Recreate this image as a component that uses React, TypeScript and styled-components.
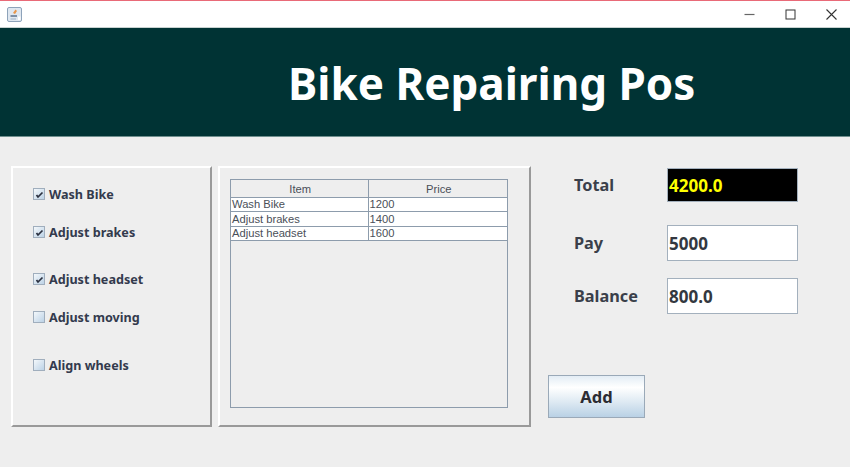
import React, { FC } from 'react';
import styled, { createGlobalStyle } from 'styled-components';

const GlobalStyle = createGlobalStyle`
  html, body {
    margin: 0;
    padding: 0;
    background: #eeeeee;
  }
  body {
    font-family: "Noto Sans", "DejaVu Sans", sans-serif;
  }
`;

const Frame = styled.div`
  width: 850px;
  height: 467px;
  display: flex;
  flex-direction: column;
  overflow: hidden;
  background: #eeeeee;
`;

const TitleBar = styled.div`
  height: 26px;
  flex: none;
  display: flex;
  align-items: center;
  justify-content: space-between;
  padding-left: 7px;
  background: #ffffff;
  border-top: 1px solid #e96a78;
  border-bottom: 1px solid #c8d2d0;
`;

const WindowButtons = styled.div`
  display: flex;
  height: 100%;
  margin-right: -2px;
`;

const WindowButton = styled.div`
  width: 41px;
  display: flex;
  align-items: center;
  justify-content: center;
`;

const Banner = styled.header`
  height: 109px;
  flex: none;
  box-sizing: border-box;
  padding: 27px 0 0 288px;
  background: #003334;
  border-bottom: 1px solid #6f8f8e;
`;

const Title = styled.h1`
  margin: 0;
  color: #ffffff;
  font-size: 44px;
  line-height: 56px;
  font-weight: 700;
  letter-spacing: 0;
  white-space: nowrap;
`;

const Content = styled.main`
  display: flex;
  gap: 6px;
  padding: 29px 0 0 11px;
`;

const Panel = styled.section<{ $width: number }>`
  box-sizing: border-box;
  width: ${(p) => p.$width}px;
  height: 261px;
  flex: none;
  border-style: solid;
  border-width: 2px;
  border-color: #ffffff #999999 #999999 #ffffff;
`;

const CheckList = styled(Panel)`
  display: flex;
  flex-direction: column;
  padding: 19px 0 0 20px;
`;

const CheckRow = styled.label<{ $top: number }>`
  display: flex;
  align-items: center;
  gap: 4px;
  height: 14px;
  margin-top: ${(p) => p.$top}px;
  color: #333a4d;
  font-size: 12.6px;
  font-weight: 700;
  white-space: nowrap;
`;

const Box = styled.span`
  box-sizing: border-box;
  width: 12px;
  height: 12px;
  flex: none;
  display: flex;
  align-items: center;
  justify-content: center;
  border: 1px solid #a0aebd;
  background: linear-gradient(135deg, #f4f8fb 0%, #bcd2e6 100%);
`;

const TablePanel = styled(Panel)`
  padding: 11px 0 0 10px;
`;

const TableFrame = styled.div`
  box-sizing: border-box;
  width: 278px;
  height: 229px;
  border: 1px solid #8d9cac;
`;

const Grid = styled.table`
  width: 276px;
  border-collapse: collapse;
  table-layout: fixed;
  font-family: "Liberation Sans", Arial, sans-serif;
  font-size: 11.2px;
  color: #4a4f58;
`;

const HeadCell = styled.th`
  height: 17px;
  padding: 0 0 0 2px;
  font-weight: 400;
  text-align: center;
  background: #eeeeee;
  border-right: 1px solid #8d9cac;
  border-bottom: 1px solid #8d9cac;
  &:last-child {
    border-right: none;
  }
`;

const Cell = styled.td`
  height: 13.4px;
  padding: 0 0 0 1px;
  line-height: 13px;
  background: #ffffff;
  border-right: 1px solid #8d9cac;
  border-bottom: 1px solid #8d9cac;
  &:last-child {
    border-right: none;
  }
`;

const Side = styled.aside`
  width: 250px;
  margin-left: 11px;
  display: flex;
  flex-direction: column;
`;

const Field = styled.div<{ $top: number }>`
  display: flex;
  align-items: center;
  margin-top: ${(p) => p.$top}px;
  padding-left: 26px;
`;

const FieldLabel = styled.div`
  width: 93px;
  flex: none;
  color: #3a3f4a;
  font-size: 16.3px;
  font-weight: 700;
`;

const ValueBox = styled.div<{ $dark?: boolean; $height: number }>`
  box-sizing: border-box;
  width: 132px;
  height: ${(p) => p.$height}px;
  display: flex;
  align-items: center;
  padding-left: 1px;
  border: 1px solid #a3b0bd;
  background: ${(p) => (p.$dark ? '#000000' : '#ffffff')};
  color: ${(p) => (p.$dark ? '#ffff00' : '#333840')};
  font-size: 17px;
  font-weight: 700;
`;

const AddButton = styled.button`
  box-sizing: border-box;
  width: 97px;
  height: 43px;
  margin-top: 61px;
  padding: 0;
  border: 1px solid #9aa9b8;
  background: linear-gradient(180deg, #e3edf5 0%, #ffffff 28%, #dfeaf3 62%, #b9d1e5 100%);
  color: #2c2c33;
  font-family: inherit;
  font-size: 16.5px;
  font-weight: 700;
`;

const AppIcon: FC = () => (
  <svg width="15" height="15" viewBox="0 0 15 15">
    <rect x="0.5" y="0.5" width="14" height="14" rx="1.5" fill="#dfe7f0" stroke="#8ea3ba" />
    <path d="M8.5 2.5 L6 6 L8 7 L10 4 Z" fill="#e8964a" />
    <path d="M3.5 8 H10 V10 H3.5 Z" fill="#7d8fa5" />
    <path d="M3.5 11.5 H9 V12.5 H3.5 Z" fill="#9fb0c4" />
    <path d="M11 9.5 H13.5 V13 H11 Z" fill="#ffffff" />
  </svg>
);

const Tick: FC = () => (
  <svg width="9" height="9" viewBox="0 0 9 9">
    <path d="M1.5 5 L3 7 L7.5 2.5" fill="none" stroke="#2b3140" strokeWidth="1.7" />
  </svg>
);

const checks = [
  { label: 'Wash Bike', top: 0, on: true },
  { label: 'Adjust brakes', top: 24, on: true },
  { label: 'Adjust headset', top: 33, on: true },
  { label: 'Adjust moving', top: 24, on: false },
  { label: 'Align wheels', top: 34, on: false },
];

const rows = [
  ['Wash Bike', '1200'],
  ['Adjust brakes', '1400'],
  ['Adjust headset', '1600'],
];

const App: FC = () => {
  return (
    <Frame>
      <GlobalStyle />
      <TitleBar>
        <AppIcon />
        <WindowButtons>
          <WindowButton>
            <svg width="11" height="11" viewBox="0 0 11 11">
              <path d="M0.5 5.5 H10.5" stroke="#666" strokeWidth="1.2" />
            </svg>
          </WindowButton>
          <WindowButton>
            <svg width="11" height="11" viewBox="0 0 11 11">
              <rect x="1" y="1" width="9" height="9" fill="none" stroke="#333" />
            </svg>
          </WindowButton>
          <WindowButton>
            <svg width="11" height="11" viewBox="0 0 11 11">
              <path d="M0.5 0.5 L10.5 10.5 M10.5 0.5 L0.5 10.5" stroke="#333" strokeWidth="1.1" />
            </svg>
          </WindowButton>
        </WindowButtons>
      </TitleBar>
      <Banner>
        <Title>Bike Repairing Pos</Title>
      </Banner>
      <Content>
        <CheckList $width={201}>
          {checks.map((c) => (
            <CheckRow key={c.label} $top={c.top}>
              <Box>{c.on && <Tick />}</Box>
              {c.label}
            </CheckRow>
          ))}
        </CheckList>
        <TablePanel $width={313}>
          <TableFrame>
            <Grid>
              <colgroup>
                <col width="137" />
                <col width="139" />
              </colgroup>
              <thead>
                <tr>
                  <HeadCell>Item</HeadCell>
                  <HeadCell>Price</HeadCell>
                </tr>
              </thead>
              <tbody>
                {rows.map((r) => (
                  <tr key={r[0]}>
                    <Cell>{r[0]}</Cell>
                    <Cell>{r[1]}</Cell>
                  </tr>
                ))}
              </tbody>
            </Grid>
          </TableFrame>
        </TablePanel>
        <Side>
          <Field $top={2}>
            <FieldLabel>Total</FieldLabel>
            <ValueBox $dark $height={34}>4200.0</ValueBox>
          </Field>
          <Field $top={23}>
            <FieldLabel>Pay</FieldLabel>
            <ValueBox $height={36}>5000</ValueBox>
          </Field>
          <Field $top={17}>
            <FieldLabel>Balance</FieldLabel>
            <ValueBox $height={36}>800.0</ValueBox>
          </Field>
          <AddButton>Add</AddButton>
        </Side>
      </Content>
    </Frame>
  );
};

export default App;
